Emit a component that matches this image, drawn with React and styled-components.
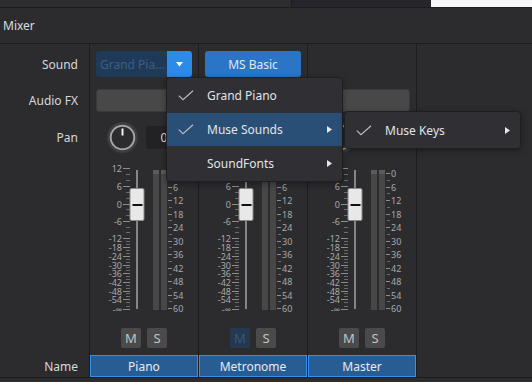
import React from 'react';
import styled, { createGlobalStyle } from 'styled-components';

const LINE = '#1d1d20';
const BG = '#2c2c2f';

const GlobalStyle = createGlobalStyle`
  html, body { margin: 0; padding: 0; background: ${BG}; }
  body { font-family: "Noto Sans", "Open Sans", sans-serif; }
  * { box-sizing: border-box; }
`;

const Page = styled.div`
  position: relative;
  width: 532px;
  height: 382px;
  overflow: hidden;
  background: ${BG};
  color: #dcdfe3;
  font-size: 12px;
`;

const TopStrip = styled.div`
  display: flex;
  height: 8px;
  border-bottom: 1px solid ${LINE};
`;

const StripSeg = styled.div`
  width: ${(p) => (p.$w ? `${p.$w}px` : 'auto')};
  flex: ${(p) => (p.$w ? 'none' : '1')};
  background: ${(p) => p.$bg};
  border-right: ${(p) => (p.$divider ? `1px solid ${LINE}` : 'none')};
`;

const Header = styled.div`
  height: 36px;
  display: flex;
  align-items: center;
  padding-left: 3px;
  border-bottom: 1px solid ${LINE};
  color: #d8dde2;
  font-size: 12px;
`;

const Body = styled.div`
  display: flex;
  height: 334px;
  border-bottom: 1px solid ${LINE};
`;

const LabelCol = styled.div`
  width: 90px;
  flex: none;
  display: flex;
  flex-direction: column;
  border-right: 1px solid ${LINE};
`;

const Channel = styled.div`
  width: 109px;
  flex: none;
  display: flex;
  flex-direction: column;
  border-right: 1px solid ${LINE};
`;

const Row = styled.div`
  height: ${(p) => p.$h}px;
  flex: none;
  display: flex;
  align-items: center;
  justify-content: ${(p) => p.$justify || 'flex-start'};
  padding-left: ${(p) => p.$pl || 0}px;
  padding-right: ${(p) => p.$pr || 0}px;
  gap: ${(p) => p.$gap || 0}px;
  position: relative;
`;

const RowLabel = styled.span`
  color: #d4d8dc;
  font-size: 12px;
`;

const Dropdown = styled.div`
  width: 96px;
  height: 26px;
  border-radius: 3px;
  overflow: hidden;
  display: flex;
`;

const DropValue = styled.div`
  flex: 1;
  background: #1f3a58;
  color: #3d5d80;
  padding-left: 4px;
  display: flex;
  align-items: center;
  white-space: nowrap;
  overflow: hidden;
`;

const DropArrow = styled.div`
  width: 25px;
  flex: none;
  background: #2c8be8;
  display: flex;
  align-items: center;
  justify-content: center;
`;

const BlueButton = styled.div`
  width: 96px;
  height: 26px;
  border-radius: 3px;
  background: #2a75c6;
  color: #e2e8ef;
  display: flex;
  align-items: center;
  justify-content: center;
`;

const FxBar = styled.div`
  width: 96px;
  height: 23px;
  border-radius: 3px;
  background: #484848;
  border: 1px solid #3a3a3c;
`;

const ValueBox = styled.div`
  width: 36px;
  height: 23px;
  border-radius: 3px;
  background: #222225;
  color: #dcdcdc;
  display: flex;
  align-items: center;
  justify-content: center;
`;

const MSButton = styled.div`
  width: 20px;
  height: 20px;
  border-radius: 2px;
  background: ${(p) => (p.$dim ? '#233952' : '#4a4a4b')};
  color: ${(p) => (p.$dim ? '#3b5676' : '#c2c2c2')};
  font-size: 13px;
  display: flex;
  align-items: center;
  justify-content: center;
`;

const NameButton = styled.div`
  width: 108px;
  height: 22px;
  background: #285d93;
  border: 1px solid #3690ec;
  color: #e8ebee;
  display: flex;
  align-items: center;
  justify-content: center;
`;

/* Fader */
const FaderCell = styled.div`
  height: 164px;
  flex: none;
  display: flex;
`;

const Scale = styled.div`
  position: relative;
  width: ${(p) => p.$w}px;
  flex: none;
`;

const ScaleLabel = styled.span`
  position: absolute;
  ${(p) => (p.$side === 'left' ? 'right: 9px;' : 'left: 6px;')}
  transform: translateY(-50%);
  font-size: 9px;
  line-height: 9px;
  color: #a9a9a9;
  white-space: nowrap;
`;

const TickSvg = styled.svg`
  position: absolute;
  top: 0;
  left: ${(p) => p.$left}px;
`;

const TrackBox = styled.div`
  position: relative;
  width: 12px;
  flex: none;
`;

const Track = styled.div`
  position: absolute;
  left: 5px;
  top: 13px;
  width: 2px;
  height: 139px;
  background: #858585;
`;

const Handle = styled.div`
  position: absolute;
  left: 50%;
  top: 31px;
  transform: translateX(-50%);
  width: 15px;
  height: 33px;
  background: #e8e8e8;
  border: 1px solid #8a8a8a;
  border-radius: 2px;
  display: flex;
  align-items: center;
  justify-content: center;
`;

const HandleLine = styled.div`
  width: 10px;
  height: 2px;
  background: #111;
`;

const Meters = styled.div`
  display: flex;
  gap: 2px;
  margin-left: 10px;
  padding-top: 13px;
`;

const MeterBar = styled.div`
  width: 6px;
  height: 140px;
  background: linear-gradient(#5b5b5c 0 4px, #474748 4px);
`;

/* Menus */
const Menu = styled.div`
  position: absolute;
  left: ${(p) => p.$x}px;
  top: ${(p) => p.$y}px;
  width: 177px;
  background: #2f2f34;
  border: 1px solid #1f1f23;
  border-radius: 4px;
  box-shadow: 0 2px 6px rgba(0, 0, 0, 0.35);
  overflow: hidden;
`;

const MenuItem = styled.div`
  height: ${(p) => p.$h || 34}px;
  display: flex;
  align-items: center;
  padding: 0 10px 0 11px;
  background: ${(p) => (p.$active ? '#2a4f76' : 'transparent')};
  color: #e0e4e9;
  font-size: 12px;
`;

const CheckSlot = styled.div`
  width: 16px;
  flex: none;
  display: flex;
  align-items: center;
`;

const ItemText = styled.span`
  flex: 1;
  margin-left: 13px;
`;

const Check = () => (
  <svg width="16" height="11" viewBox="0 0 16 11">
    <polyline points="0.8,5.6 5,9.6 15,0.8" fill="none" stroke="#b9bcc0" strokeWidth="1.2" />
  </svg>
);

const SubArrow = () => (
  <svg width="5" height="7" viewBox="0 0 5 7">
    <polygon points="0,0 5,3.5 0,7" fill="#e6e6e6" />
  </svg>
);

const DownTri = () => (
  <svg width="7" height="5" viewBox="0 0 7 5">
    <polygon points="0,0 7,0 3.5,4.5" fill="#ffffff" />
  </svg>
);

const Knob = () => (
  <svg width="31" height="31" viewBox="0 0 31 31">
    <circle cx="15.5" cy="15.5" r="14.2" fill="none" stroke="#3e3e40" strokeWidth="2.4" />
    <circle cx="15.5" cy="15.5" r="11.8" fill="none" stroke="#a5a5a5" strokeWidth="2" />
    <line x1="15.5" y1="6.5" x2="15.5" y2="13.5" stroke="#f2f2f2" strokeWidth="2" />
  </svg>
);

const LEFT_MARKS = [
  ['12', 11], ['6', 29], ['0', 46.5], ['-6', 64], ['-12', 81], ['-18', 90],
  ['-24', 99], ['-30', 107.5], ['-36', 116], ['-42', 125], ['-48', 133.5],
  ['-54', 142], ['-∞', 152],
];
const RIGHT_MARKS = Array.from({ length: 11 }, (_, i) => [String(i * 6), 16 + 13.5 * i]);

const snap = (y) => Math.round(y) + 0.5;

const LeftTicks = () => {
  const lines = [];
  LEFT_MARKS.forEach(([, y], i) => {
    lines.push(<line key={`M${i}`} x1="1" x2="8" y1={snap(y)} y2={snap(y)} stroke="#8c8c8c" />);
    const next = LEFT_MARKS[i + 1];
    if (next) {
      [1 / 3, 2 / 3].forEach((f, j) => {
        const yy = y + (next[1] - y) * f;
        lines.push(<line key={`m${i}-${j}`} x1="4" x2="8" y1={snap(yy)} y2={snap(yy)} stroke="#6c6c6c" />);
      });
    }
  });
  return (
    <TickSvg $left={32} width="9" height="164">
      {lines}
    </TickSvg>
  );
};

const RightTicks = () => {
  const lines = [];
  RIGHT_MARKS.forEach(([, y], i) => {
    lines.push(<line key={`M${i}`} x1="1" x2="5" y1={snap(y)} y2={snap(y)} stroke="#8c8c8c" />);
    const next = RIGHT_MARKS[i + 1];
    if (next) {
      const yy = (y + next[1]) / 2;
      lines.push(<line key={`m${i}`} x1="2" x2="5" y1={snap(yy)} y2={snap(yy)} stroke="#6c6c6c" />);
    }
  });
  return (
    <TickSvg $left={0} width="6" height="164">
      {lines}
    </TickSvg>
  );
};

const Fader = () => (
  <FaderCell>
    <Scale $w={41}>
      {LEFT_MARKS.map(([t, y]) => (
        <ScaleLabel key={t} $side="left" style={{ top: y }}>{t}</ScaleLabel>
      ))}
      <LeftTicks />
    </Scale>
    <TrackBox>
      <Track />
      <Handle><HandleLine /></Handle>
    </TrackBox>
    <Meters>
      <MeterBar />
      <MeterBar />
    </Meters>
    <Scale $w={31}>
      <RightTicks />
      {RIGHT_MARKS.map(([t, y]) => (
        <ScaleLabel key={t} $side="right" style={{ top: y }}>{t}</ScaleLabel>
      ))}
    </Scale>
  </FaderCell>
);

const channels = [
  { name: 'Piano', sound: 'dropdown', muteDim: false },
  { name: 'Metronome', sound: 'ms', muteDim: true },
  { name: 'Master', sound: null, muteDim: false },
];

export default function App() {
  return (
    <>
      <GlobalStyle />
      <Page>
        <TopStrip>
          <StripSeg $w={292} $bg="#2d2d30" $divider />
          <StripSeg $w={139} $bg="#25252b" />
          <StripSeg $bg="#f7f7f7" />
        </TopStrip>
        <Header>Mixer</Header>
        <Body>
          <LabelCol>
            <Row $h={40} $justify="flex-end" $pr={11}><RowLabel>Sound</RowLabel></Row>
            <Row $h={33} $justify="flex-end" $pr={11}><RowLabel>Audio FX</RowLabel></Row>
            <Row $h={40} $justify="flex-end" $pr={11}><RowLabel>Pan</RowLabel></Row>
            <Row $h={164} />
            <Row $h={34} />
            <Row $h={22} $justify="flex-end" $pr={11}><RowLabel>Name</RowLabel></Row>
          </LabelCol>
          {channels.map((c) => (
            <Channel key={c.name}>
              <Row $h={40} $pl={6}>
                {c.sound === 'dropdown' && (
                  <Dropdown>
                    <DropValue>Grand Pia...</DropValue>
                    <DropArrow><DownTri /></DropArrow>
                  </Dropdown>
                )}
                {c.sound === 'ms' && <BlueButton>MS Basic</BlueButton>}
              </Row>
              <Row $h={33} $pl={6}><FxBar /></Row>
              <Row $h={40} $pl={17} $gap={8}>
                <Knob />
                <ValueBox>0</ValueBox>
              </Row>
              <Fader />
              <Row $h={34} $justify="center" $gap={6}>
                <MSButton $dim={c.muteDim}>M</MSButton>
                <MSButton>S</MSButton>
              </Row>
              <Row $h={22}><NameButton>{c.name}</NameButton></Row>
            </Channel>
          ))}
        </Body>

        <Menu $x={166} $y={77}>
          <MenuItem $h={35}>
            <CheckSlot><Check /></CheckSlot>
            <ItemText>Grand Piano</ItemText>
          </MenuItem>
          <MenuItem $h={33} $active>
            <CheckSlot><Check /></CheckSlot>
            <ItemText>Muse Sounds</ItemText>
            <SubArrow />
          </MenuItem>
          <MenuItem $h={35}>
            <CheckSlot />
            <ItemText>SoundFonts</ItemText>
            <SubArrow />
          </MenuItem>
        </Menu>

        <Menu $x={344} $y={111}>
          <MenuItem $h={36}>
            <CheckSlot><Check /></CheckSlot>
            <ItemText>Muse Keys</ItemText>
            <SubArrow />
          </MenuItem>
        </Menu>
      </Page>
    </>
  );
}
